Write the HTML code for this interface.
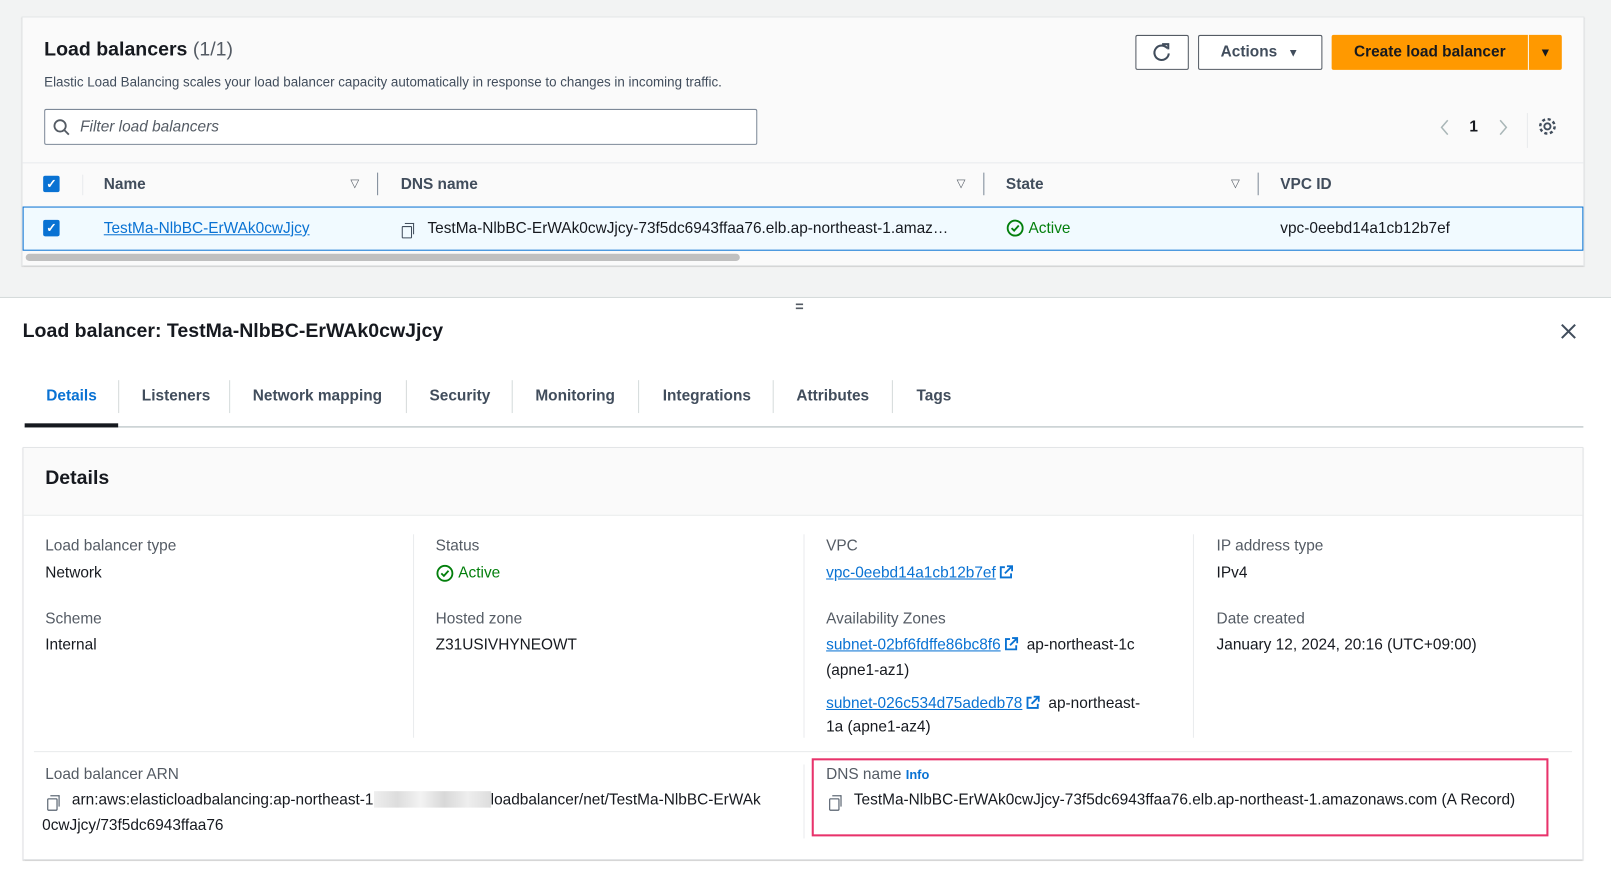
<!DOCTYPE html>
<html><head><meta charset="utf-8"><style>
*{box-sizing:border-box;margin:0;padding:0}
html,body{width:1611px;height:874px;overflow:hidden;background:#fff}
#w{position:absolute;left:0;top:0;width:1568px;height:851px;transform:scale(1.0275);transform-origin:0 0;font-family:"Liberation Sans",sans-serif;color:#16191f;font-size:15px}
.a{position:absolute;white-space:nowrap}
.lbl{color:#545b64;font-size:15px}
.lnk{color:#0972d3;text-decoration:underline}
.b{font-weight:bold}
.vl{position:absolute;width:1px;background:#e9ebed}
.copy{display:inline-block;width:12px;height:13px;position:relative;vertical-align:-2px}
.copy:before{content:"";position:absolute;left:0;top:3px;width:8px;height:10px;border:1.5px solid #414d5c;border-radius:1px}
.copy:after{content:"";position:absolute;left:3px;top:0;width:8px;height:10px;border-top:1.5px solid #414d5c;border-right:1.5px solid #414d5c}
.ext{display:inline-block;width:14px;height:14px;vertical-align:-2px;margin-left:3px}
.tri{color:#545b64;font-size:11px}
</style></head><body><div id="w">
<div class="a" style="left:0;top:0;width:1568px;height:290px;background:#f2f3f3;border-bottom:1px solid #d5dbdb"></div>
<div class="a" style="left:21px;top:16px;width:1521px;height:243px;background:#fafafa;border:1px solid #e3e5e7;box-shadow:0 1px 1px rgba(0,0,0,.25)"></div>
<div class="a b" style="left:43px;top:38px;font-size:19px">Load balancers <span style="font-weight:normal;color:#545b64">(1/1)</span></div>
<div class="a" style="left:43px;top:72px;font-size:13px;color:#414d5c">Elastic Load Balancing scales your load balancer capacity automatically in response to changes in incoming traffic.</div>
<div class="a" style="left:1105px;top:34px;width:52px;height:34px;border:1px solid #545b64;border-radius:2px;background:#fff"><svg width="50" height="32"><path d="M30 12a7 7 0 1 0 1.5 5" fill="none" stroke="#414d5c" stroke-width="2"/><path d="M25 8h6v5" fill="none" stroke="#414d5c" stroke-width="2"/></svg></div>
<div class="a b" style="left:1166px;top:34px;width:121px;height:34px;border:1px solid #545b64;border-radius:2px;background:#fff;color:#414d5c;font-size:15px;line-height:32px;padding-left:21px">Actions <span style="font-size:11px;margin-left:6px">▼</span></div>
<div class="a b" style="left:1296px;top:34px;width:191px;height:34px;background:#ff9900;border-radius:2px 0 0 2px;font-size:15px;line-height:34px;text-align:center">Create load balancer</div>
<div class="a" style="left:1488px;top:34px;width:32px;height:34px;background:#ff9900;border-radius:0 2px 2px 0;text-align:center;line-height:34px;font-size:12px">▼</div>
<div class="a" style="left:43px;top:106px;width:694px;height:35px;border:1px solid #7d8998;border-radius:2px;background:#fff"></div>
<svg class="a" style="left:51px;top:115px" width="18" height="18"><circle cx="7.5" cy="7.5" r="5.5" fill="none" stroke="#545b64" stroke-width="1.8"/><path d="M11.5 11.5L16 16" stroke="#545b64" stroke-width="1.8"/></svg>
<div class="a" style="left:78px;top:115px;font-style:italic;color:#545b64;font-size:15px">Filter load balancers</div>
<svg class="a" style="left:1398px;top:114px" width="80" height="20"><path d="M11 3L5 10l6 7" fill="none" stroke="#aab7b8" stroke-width="1.5"/><path d="M62 3l6 7-6 7" fill="none" stroke="#aab7b8" stroke-width="1.5"/></svg>
<div class="a b" style="left:1430px;top:115px">1</div>
<div class="vl" style="left:1486px;top:110px;height:34px"></div>
<svg class="a" style="left:1496px;top:113px" width="20" height="20"><circle cx="10" cy="10" r="3" fill="none" stroke="#414d5c" stroke-width="1.8"/><circle cx="10" cy="10" r="7" fill="none" stroke="#414d5c" stroke-width="2.4" stroke-dasharray="3 2.5"/></svg>
<div class="a" style="left:22px;top:158px;width:1519px;height:1px;background:#e9ebed"></div>
<div class="a" style="left:42px;top:171px;width:16px;height:16px;background:#0972d3;border-radius:2px;color:#fff;font-size:12px;text-align:center;line-height:16px;font-weight:bold">✓</div>
<div class="vl" style="left:80px;top:170px;height:20px"></div>
<div class="a b" style="left:101px;top:171px;color:#414d5c">Name</div>
<div class="a tri" style="left:341px;top:172px">▽</div>
<div class="a" style="left:367px;top:168px;width:1px;height:22px;background:#7d8998"></div>
<div class="a b" style="left:390px;top:171px;color:#414d5c">DNS name</div>
<div class="a tri" style="left:931px;top:172px">▽</div>
<div class="a" style="left:957px;top:168px;width:1px;height:22px;background:#7d8998"></div>
<div class="a b" style="left:979px;top:171px;color:#414d5c">State</div>
<div class="a tri" style="left:1198px;top:172px">▽</div>
<div class="a" style="left:1224px;top:168px;width:1px;height:22px;background:#7d8998"></div>
<div class="a b" style="left:1246px;top:171px;color:#414d5c">VPC ID</div>
<div class="a" style="left:22px;top:201px;width:1519px;height:43px;background:#f1faff;border:1px solid #0972d3"></div>
<div class="a" style="left:42px;top:214px;width:16px;height:16px;background:#0972d3;border-radius:2px;color:#fff;font-size:12px;text-align:center;line-height:16px;font-weight:bold">✓</div>
<div class="a lnk" style="left:101px;top:214px">TestMa-NlbBC-ErWAk0cwJjcy</div>
<div class="a" style="left:391px;top:215px"><span class="copy"></span></div>
<div class="a" style="left:416px;top:214px">TestMa-NlbBC-ErWAk0cwJjcy-73f5dc6943ffaa76.elb.ap-northeast-1.amaz…</div>
<svg class="a" style="left:979px;top:213px" width="18" height="18"><circle cx="9" cy="9" r="7.3" fill="none" stroke="#037f0c" stroke-width="1.8"/><path d="M5.5 9l2.5 2.5 4.5-5" fill="none" stroke="#037f0c" stroke-width="1.8"/></svg>
<div class="a" style="left:1001px;top:214px;color:#037f0c">Active</div>
<div class="a" style="left:1246px;top:214px">vpc-0eebd14a1cb12b7ef</div>
<div class="a" style="left:25px;top:247px;width:695px;height:7px;background:#c0c0c0;border-radius:4px"></div>
<div class="a b" style="left:774px;top:290px;font-size:14px;color:#545b64">=</div>
<div class="a b" style="left:22px;top:312px;font-size:19px">Load balancer: TestMa-NlbBC-ErWAk0cwJjcy</div>
<svg class="a" style="left:1518px;top:314px" width="17" height="17"><path d="M2 2l13 13M15 2L2 15" stroke="#414d5c" stroke-width="2"/></svg>
<div class="a b" style="left:45px;top:377px;color:#0972d3">Details</div>
<div class="a b" style="left:138px;top:377px;color:#414d5c">Listeners</div>
<div class="a b" style="left:246px;top:377px;color:#414d5c">Network mapping</div>
<div class="a b" style="left:418px;top:377px;color:#414d5c">Security</div>
<div class="a b" style="left:521px;top:377px;color:#414d5c">Monitoring</div>
<div class="a b" style="left:645px;top:377px;color:#414d5c">Integrations</div>
<div class="a b" style="left:775px;top:377px;color:#414d5c">Attributes</div>
<div class="a b" style="left:892px;top:377px;color:#414d5c">Tags</div>
<div class="vl" style="left:115px;top:370px;height:32px;background:#d5dbdb"></div>
<div class="vl" style="left:223px;top:370px;height:32px;background:#d5dbdb"></div>
<div class="vl" style="left:395px;top:370px;height:32px;background:#d5dbdb"></div>
<div class="vl" style="left:498px;top:370px;height:32px;background:#d5dbdb"></div>
<div class="vl" style="left:621px;top:370px;height:32px;background:#d5dbdb"></div>
<div class="vl" style="left:752px;top:370px;height:32px;background:#d5dbdb"></div>
<div class="vl" style="left:868px;top:370px;height:32px;background:#d5dbdb"></div>
<div class="a" style="left:24px;top:415px;width:1517px;height:1px;background:#aab7b8"></div>
<div class="a" style="left:24px;top:412px;width:91px;height:4px;background:#16191f"></div>
<div class="a" style="left:22px;top:435px;width:1519px;height:402px;border:1px solid #e3e5e7;box-shadow:0 1px 1px rgba(0,0,0,.25);background:#fff"></div>
<div class="a" style="left:23px;top:436px;width:1517px;height:66px;background:#fafafa;border-bottom:1px solid #eaeded"></div>
<div class="a b" style="left:44px;top:455px;font-size:19px">Details</div>
<div class="vl" style="left:402px;top:520px;height:198px"></div>
<div class="vl" style="left:782px;top:520px;height:198px"></div>
<div class="vl" style="left:1161px;top:520px;height:198px"></div>
<div class="a" style="left:33px;top:731px;width:1497px;height:1px;background:#e9ebed"></div>
<div class="vl" style="left:782px;top:744px;height:72px"></div>
<div class="a lbl" style="left:44px;top:523px">Load balancer type</div>
<div class="a" style="left:44px;top:549px">Network</div>
<div class="a lbl" style="left:44px;top:594px">Scheme</div>
<div class="a" style="left:44px;top:619px">Internal</div>
<div class="a lbl" style="left:424px;top:523px">Status</div>
<svg class="a" style="left:424px;top:549px" width="18" height="18"><circle cx="9" cy="9" r="7.3" fill="none" stroke="#037f0c" stroke-width="1.8"/><path d="M5.5 9l2.5 2.5 4.5-5" fill="none" stroke="#037f0c" stroke-width="1.8"/></svg>
<div class="a" style="left:446px;top:549px;color:#037f0c">Active</div>
<div class="a lbl" style="left:424px;top:594px">Hosted zone</div>
<div class="a" style="left:424px;top:619px">Z31USIVHYNEOWT</div>
<div class="a lbl" style="left:804px;top:523px">VPC</div>
<div class="a" style="left:804px;top:549px"><span class="lnk">vpc-0eebd14a1cb12b7ef</span><svg class="ext" viewBox="0 0 14 14"><path d="M6 2H2v10h10V8M8 1h5v5M13 1L6 8" fill="none" stroke="#0972d3" stroke-width="1.8"/></svg></div>
<div class="a lbl" style="left:804px;top:594px">Availability Zones</div>
<div class="a" style="left:804px;top:619px"><span class="lnk">subnet-02bf6fdffe86bc8f6</span><svg class="ext" viewBox="0 0 14 14"><path d="M6 2H2v10h10V8M8 1h5v5M13 1L6 8" fill="none" stroke="#0972d3" stroke-width="1.8"/></svg> &nbsp;ap-northeast-1c</div>
<div class="a" style="left:804px;top:644px">(apne1-az1)</div>
<div class="a" style="left:804px;top:676px"><span class="lnk">subnet-026c534d75adedb78</span><svg class="ext" viewBox="0 0 14 14"><path d="M6 2H2v10h10V8M8 1h5v5M13 1L6 8" fill="none" stroke="#0972d3" stroke-width="1.8"/></svg> &nbsp;ap-northeast-</div>
<div class="a" style="left:804px;top:699px">1a (apne1-az4)</div>
<div class="a lbl" style="left:1184px;top:523px">IP address type</div>
<div class="a" style="left:1184px;top:549px">IPv4</div>
<div class="a lbl" style="left:1184px;top:594px">Date created</div>
<div class="a" style="left:1184px;top:619px">January 12, 2024, 20:16 (UTC+09:00)</div>
<div class="a lbl" style="left:44px;top:745px">Load balancer ARN</div>
<div class="a" style="left:46px;top:772px"><span class="copy"></span></div>
<div class="a" style="left:70px;top:770px;font-size:15px">arn:aws:elasticloadbalancing:ap-northeast-1<span style="display:inline-block;width:114px;height:16px;vertical-align:-3px;background:linear-gradient(90deg,#eee,#ddd,#f3f3f3,#d8d8d8,#eee,#ddd)"></span>loadbalancer/net/TestMa-NlbBC-ErWAk</div>
<div class="a" style="left:41px;top:795px">0cwJjcy/73f5dc6943ffaa76</div>
<div class="a" style="left:790px;top:738px;width:717px;height:76px;border:2.5px solid #e8336b"></div>
<div class="a lbl" style="left:804px;top:745px">DNS name <span class="b" style="color:#0972d3;font-size:12.5px">Info</span></div>
<div class="a" style="left:807px;top:772px"><span class="copy"></span></div>
<div class="a" style="left:831px;top:770px;font-size:15px">TestMa-NlbBC-ErWAk0cwJjcy-73f5dc6943ffaa76.elb.ap-northeast-1.amazonaws.com (A Record)</div>
</div></body></html>
